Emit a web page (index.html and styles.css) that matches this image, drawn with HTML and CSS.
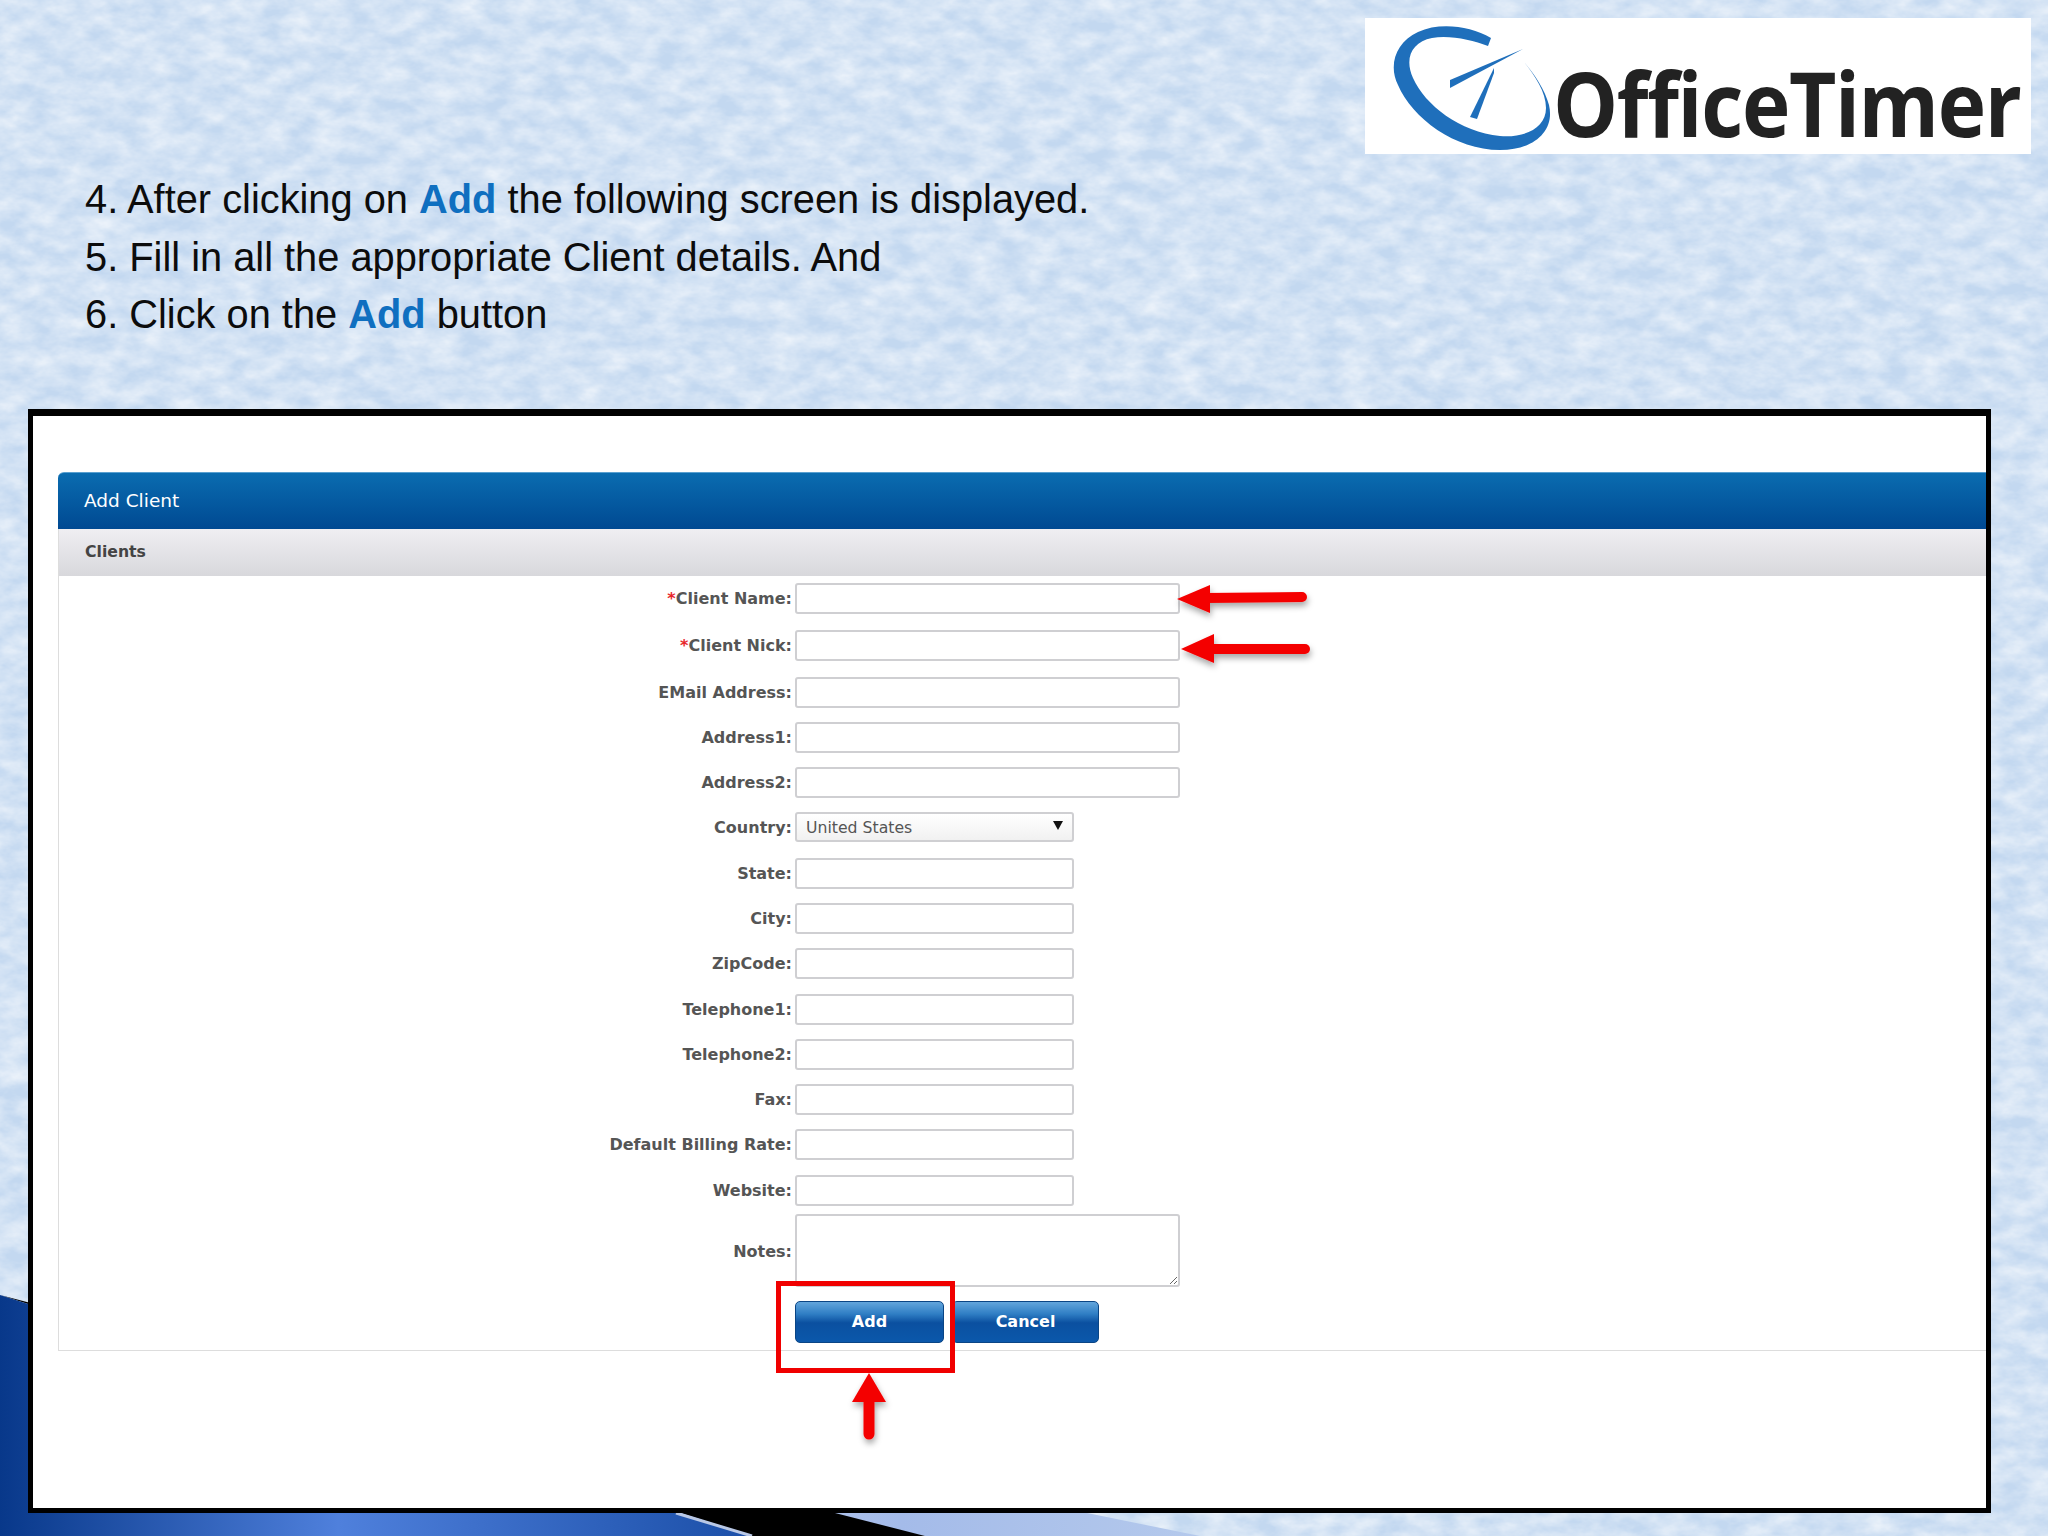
FILE: index.html
```html
<!DOCTYPE html>
<html lang="en">
<head>
  <meta charset="UTF-8">
  <title>OfficeTimer - Add Client</title>
  <link rel="stylesheet" href="styles.css">
</head>
<body>

<div class="slide">
  <!-- slide background: mottled paper and the corner shapes -->
  <svg class="slide-bg" viewBox="0 0 2048 1536" width="2048" height="1536" aria-hidden="true">
    <defs>
      <filter id="mottle" x="0" y="0" width="100%" height="100%">
        <feTurbulence type="fractalNoise" baseFrequency="0.035 0.06" numOctaves="4" seed="7"/>
        <feColorMatrix type="matrix" values="0 0 0 0 1  0 0 0 0 1  0 0 0 0 1  1 0 0 0 -0.24"/>
      </filter>
      <linearGradient id="cornerBlue" x1="0" y1="0" x2="1" y2="0">
        <stop offset="0" stop-color="#08388a"/>
        <stop offset="0.45" stop-color="#4f80dc"/>
        <stop offset="1" stop-color="#1b4fa8"/>
      </linearGradient>
      <linearGradient id="cornerPale" x1="0" y1="0" x2="1" y2="0">
        <stop offset="0" stop-color="#c9d6f2"/>
        <stop offset="0.5" stop-color="#a4bbe9"/>
        <stop offset="1" stop-color="#b4c9ec"/>
      </linearGradient>
    </defs>
    <rect width="2048" height="1536" fill="#c3d8f0"/>
    <rect width="2048" height="1536" filter="url(#mottle)"/>
    <polygon points="600,1470 1087,1513 1200,1536 925,1536" fill="url(#cornerPale)"/>
    <polygon points="0,1295 835,1513 925,1536 752,1536" fill="#000"/>
    <polygon points="0,1295 752,1536 0,1536" fill="url(#cornerBlue)"/>
    <line x1="676" y1="1513" x2="752" y2="1536" stroke="#b9c8e6" stroke-width="3"/>
  </svg>

  <div class="logo-row">
    <div class="logo">
      <svg class="logo-mark" viewBox="1385 20 170 135" width="170" height="135" aria-hidden="true">
        <path fill="#1f6fbb" d="M1491 38C1470 26 1440 22 1418 32C1396 42 1388 65 1398 85C1412 118 1455 150 1500 150C1535 150 1555 130 1549 105C1545 90 1535 75 1524 62C1535 76 1546 92 1546 108C1546 128 1525 138 1500 136C1460 132 1425 105 1413 78C1404 58 1412 42 1432 38C1450 35 1472 40 1488 46Z"/>
        <polygon fill="#1f6fbb" points="1523,49 1450,80 1450,88"/>
        <polygon fill="#1f6fbb" points="1494,68 1470,117 1477,119 1494,73"/>
      </svg>
      <span class="logo-text">OfficeTimer</span>
    </div>
  </div>

  <div class="steps">
    <p>4. After clicking on <b>Add</b> the following screen is displayed.</p>
    <p>5. Fill in all the appropriate Client details. And</p>
    <p>6. Click on the <b>Add</b> button</p>
  </div>

  <div class="shot">
    <div class="panel">
      <div class="panel-title">Add Client</div>
      <div class="panel-sub">Clients</div>
      <form class="panel-body">
        <div class="row row-tall"><label><i>*</i>Client Name:</label><input type="text" class="wide"></div>
        <div class="row row-tall"><label><i>*</i>Client Nick:</label><input type="text" class="wide"></div>
        <div class="row"><label>EMail Address:</label><input type="text" class="wide"></div>
        <div class="row"><label>Address1:</label><input type="text" class="wide"></div>
        <div class="row"><label>Address2:</label><input type="text" class="wide"></div>
        <div class="row">
          <label>Country:</label>
          <div class="select">United States</div>
        </div>
        <div class="row"><label>State:</label><input type="text"></div>
        <div class="row"><label>City:</label><input type="text"></div>
        <div class="row"><label>ZipCode:</label><input type="text"></div>
        <div class="row"><label>Telephone1:</label><input type="text"></div>
        <div class="row"><label>Telephone2:</label><input type="text"></div>
        <div class="row"><label>Fax:</label><input type="text"></div>
        <div class="row"><label>Default Billing Rate:</label><input type="text"></div>
        <div class="row row-last"><label>Website:</label><input type="text"></div>
        <div class="row row-notes"><label>Notes:</label><textarea></textarea></div>
        <div class="actions">
          <button type="button" class="btn btn-add">Add</button>
          <button type="button" class="btn btn-cancel">Cancel</button>
        </div>
      </form>
    </div>

    <!-- red annotations drawn on top of the screenshot -->
    <svg class="marks" viewBox="33 416 1953 1092" width="1953" height="1092" aria-hidden="true">
      <defs>
        <filter id="markShadow" x="-20%" y="-20%" width="140%" height="160%">
          <feDropShadow dx="1" dy="4" stdDeviation="3" flood-color="#000" flood-opacity="0.35"/>
        </filter>
      </defs>
      <g fill="#f40000" stroke="none" filter="url(#markShadow)">
        <polygon points="1177,599 1210,585 1210,613"/>
        <line x1="1205" y1="598" x2="1302" y2="597" stroke="#f40000" stroke-width="10" stroke-linecap="round"/>
        <polygon points="1181,649 1214,634 1214,663"/>
        <line x1="1210" y1="649" x2="1305" y2="649" stroke="#f40000" stroke-width="10" stroke-linecap="round"/>
        <polygon points="869,1373 886,1402 852,1402"/>
        <line x1="869" y1="1400" x2="869" y2="1434" stroke="#f40000" stroke-width="11" stroke-linecap="round"/>
      </g>
      <rect x="778.5" y="1283.5" width="174" height="87" fill="none" stroke="#f00000" stroke-width="5"/>
    </svg>
  </div>
</div>

</body>
</html>
```

FILE: styles.css
```css
* { box-sizing: border-box; }
html, body {
  margin: 0;
  padding: 0;
}
body {
  background: #c3d8f0;
}
.slide {
  position: relative;
  width: 2048px;
  height: 1536px;
  overflow: hidden;
  padding-top: 18px;
  font-family: "Liberation Sans", Arial, sans-serif;
}
.slide-bg {
  position: absolute;
  top: 0;
  left: 0;
}

/* logo */
.logo-row {
  position: relative;
  display: flex;
  justify-content: flex-end;
  padding-right: 17px;
}
.logo {
  display: flex;
  width: 666px;
  height: 136px;
  background: #fff;
  padding-left: 20px;
}
.logo-mark {
  flex: none;
  margin-top: 2px;
}
.logo-text {
  margin: 34px 0 0 -2px;
  font-family: "Open Sans", sans-serif;
  font-weight: 700;
  font-size: 90px;
  line-height: 100px;
  letter-spacing: -1.5px;
  color: #222;
  white-space: nowrap;
  transform: scaleX(0.91);
  transform-origin: left top;
}

/* numbered steps */
.steps {
  position: relative;
  margin-top: 17px;
  padding-left: 85px;
  font-size: 39.8px;
  line-height: 57.5px;
  color: #0c0c0c;
}
.steps p {
  margin: 0;
}
.steps b {
  color: #0f6fc0;
}

/* the framed screenshot */
.shot {
  position: relative;
  width: 1963px;
  height: 1104px;
  margin: 65px 0 0 28px;
  border: 5px solid #000;
  border-top-width: 7px;
  background: #fff;
  padding: 56px 0 0 25px;
  font-family: "DejaVu Sans", sans-serif;
}
.marks {
  position: absolute;
  top: 0;
  left: 0;
}
.panel-title {
  height: 57px;
  padding-left: 26px;
  border-top: 1px solid #5aa0d0;
  border-top-left-radius: 6px;
  background: linear-gradient(to bottom, #0a6cb0, #004992);
  color: #fff;
  font-size: 18.5px;
  line-height: 56px;
}
.panel-sub {
  height: 47px;
  padding-left: 26px;
  background: linear-gradient(to bottom, #efeef2, #d8d8dc);
  border-left: 1px solid #ddd;
  color: #444;
  font-size: 15.7px;
  font-weight: 700;
  line-height: 46px;
}
.panel-body {
  height: 775px;
  padding-top: 7px;
  border-left: 1px solid #ddd;
  border-bottom: 1px solid #ddd;
}
.row {
  display: flex;
  align-items: flex-start;
  height: 45.3px;
}
.row-tall {
  height: 47px;
}
.row-last {
  height: 39px;
}
.row label {
  flex: none;
  width: 733px;
  text-align: right;
  color: #555;
  font-size: 16px;
  font-weight: 700;
  line-height: 32px;
  white-space: nowrap;
}
.row label i {
  color: #e8262a;
  font-style: normal;
}
.row input,
.select {
  width: 279px;
  height: 31px;
  margin: 0 0 0 3px;
  padding: 0 9px;
  border: 2px solid #cfcfd2;
  border-radius: 3px;
  background: #fff;
}
.row input.wide {
  width: 385px;
}
.select {
  position: relative;
  height: 30px;
  background: linear-gradient(to bottom, #fff, #f1f1f1);
  color: #555;
  font-size: 15.7px;
  line-height: 28px;
}
.select::after {
  content: "";
  position: absolute;
  top: 7px;
  right: 9px;
  border-style: solid;
  border-width: 9px 5px 0;
  border-color: #111 transparent transparent;
}
.row-notes {
  height: 87px;
}
.row-notes label {
  line-height: 75px;
}
.row-notes textarea {
  display: block;
  width: 385px;
  height: 73px;
  margin: 0 0 0 3px;
  border: 2px solid #cfcfd2;
  border-radius: 3px;
}
.actions {
  display: flex;
  padding-left: 736px;
}
.btn {
  height: 42px;
  border: 1px solid #0a4585;
  border-radius: 5px;
  background: linear-gradient(to bottom, #62a5dc 0, #2f7ec4 30%, #0b50a0 52%, #0b58ab 100%);
  color: #fff;
  font-family: "DejaVu Sans", sans-serif;
  font-size: 16px;
  font-weight: 700;
}
.btn-add {
  width: 149px;
}
.btn-cancel {
  width: 147px;
  margin-left: 8px;
}
```
